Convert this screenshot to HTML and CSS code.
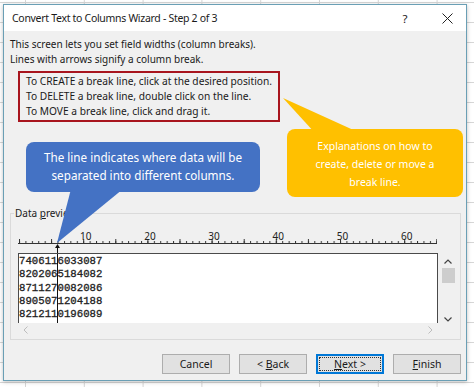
FILE: index.html
```html
<!DOCTYPE html>
<html lang="en">

<head>
  <meta charset="UTF-8">
  <meta name="viewport" content="width=device-width, initial-scale=1.0">
  <title>Convert Text to Columns Wizard</title>
  <link rel="stylesheet" href="styles.css">
</head>

<body>
  <div class="dialog">
    <div class="titlebar">
      <span class="title">Convert Text to Columns Wizard - Step 2 of 3</span>
      <span class="help">?</span>
      <span class="close">
        <svg width="11" height="11" viewBox="0 0 11 11">
          <path d="M0.5 0.5L10.5 10.5M10.5 0.5L0.5 10.5" stroke="#222" stroke-width="1" />
        </svg>
      </span>
    </div>

    <div class="content">
      <p class="intro">This screen lets you set field widths (column breaks).<br>Lines with arrows signify a column break.</p>

      <div class="howto">
        To CREATE a break line, click at the desired position.<br>
        To DELETE a break line, double click on the line.<br>
        To MOVE a break line, click and drag it.
      </div>

      <fieldset class="group">
        <legend>Data <u>p</u>review</legend>

        <!-- ruler: one char = 6.42px, column 0 at x=5 -->
        <svg class="ruler" width="440" height="32" viewBox="0 0 440 32">
          <defs>
            <pattern id="tick1" x="5" y="0" width="6.42" height="32" patternUnits="userSpaceOnUse">
              <rect x="0" y="0" width="1" height="32" fill="#333" />
            </pattern>
            <pattern id="tick5" x="5" y="0" width="32.1" height="32" patternUnits="userSpaceOnUse">
              <rect x="0" y="0" width="1" height="32" fill="#333" />
            </pattern>
          </defs>
          <rect x="4" y="22" width="419" height="1" fill="#333" />
          <rect x="5" y="20" width="418" height="2" fill="url(#tick1)" />
          <rect x="5" y="18" width="418" height="4" fill="url(#tick5)" />
          <g class="ruler-num" text-anchor="middle">
            <text x="71.7" y="19">10</text>
            <text x="135.9" y="19">20</text>
            <text x="200.1" y="19">30</text>
            <text x="264.3" y="19">40</text>
            <text x="328.5" y="19">50</text>
            <text x="392.7" y="19">60</text>
          </g>
          <!-- break line arrow -->
          <path d="M43.5 23 L46 27 L41 27 Z" fill="#111" />
          <rect x="43" y="27" width="1" height="5" fill="#111" />
        </svg>

        <div class="preview-row">
          <div class="preview-col">
            <div class="preview">
              <div class="break"></div>
              <div>7406116033087</div>
              <div>8202065184082</div>
              <div>8711270082086</div>
              <div>8905071204188</div>
              <div>8212110196089</div>
            </div>
            <div class="hscroll">
              <svg width="5" height="8" viewBox="0 0 5 8"><path d="M4.5 0.5L1 4L4.5 7.5" fill="none" stroke="#bdbdbd" /></svg>
              <svg width="5" height="8" viewBox="0 0 5 8"><path d="M0.5 0.5L4 4L0.5 7.5" fill="none" stroke="#bdbdbd" /></svg>
            </div>
          </div>
          <div class="vscroll">
            <svg width="8" height="5" viewBox="0 0 8 5"><path d="M0.5 4.5L4 1L7.5 4.5" fill="none" stroke="#444" stroke-width="1.2" /></svg>
            <span class="thumb"></span>
            <svg class="down" width="8" height="5" viewBox="0 0 8 5"><path d="M0.5 0.5L4 4L7.5 0.5" fill="none" stroke="#444" stroke-width="1.2" /></svg>
          </div>
        </div>
      </fieldset>

      <div class="buttons">
        <button class="btn">Cancel</button>
        <button class="btn">&lt; <u>B</u>ack</button>
        <button class="btn btn-default"><u>N</u>ext &gt;</button>
        <button class="btn"><u>F</u>inish</button>
      </div>
    </div>

    <!-- annotations over the dialog -->
    <div class="callout callout-yellow">Explanations on how to<br>create, delete or move a<br>break line.</div>
    <div class="callout callout-blue">The line indicates where data will be<br>separated into different columns.</div>
    <svg class="tails" width="462" height="375" viewBox="0 0 462 375">
      <polygon points="279,93 311,128 356,128" fill="#ffc000" />
      <polygon points="67,184 119,184 53,238" fill="#4472c4" />
    </svg>
  </div>
</body>

</html>
```

FILE: styles.css
```css
* {
  margin: 0;
  padding: 0;
}

body {
  height: 387px;
  overflow: hidden;
  background-color: #fff;
  background-image:
    linear-gradient(to right, #d6d6d6 1px, transparent 1px),
    linear-gradient(to bottom, #d6d6d6 1px, transparent 1px);
  background-size: 58.8px 20px, 58.8px 20px;
  background-position: 25px 0, 0 2px;
  font-family: "Noto Sans", "Open Sans", sans-serif;
  color: #1a1a1a;
}

.dialog {
  position: relative;
  box-sizing: border-box;
  width: 464px;
  height: 377px;
  margin: 4px 0 0 3px;
  border: 1px solid #6a9fb5;
  background-color: #f0f0f0;
  box-shadow: 0 1px 4px rgba(0, 0, 0, 0.25);
  display: flex;
  flex-direction: column;
}

/* title bar */
.titlebar {
  flex: none;
  height: 26px;
  display: flex;
  align-items: center;
  padding: 0 4px 0 8px;
  background-color: #fff;
  font-size: 10.5px;
}

.titlebar .title {
  flex: 1;
  letter-spacing: -0.3px;
}

.titlebar .help {
  width: 30px;
  margin-right: 12px;
  text-align: center;
  font-size: 11.5px;
}

.titlebar .close {
  width: 30px;
  display: flex;
  justify-content: center;
}

/* body */
.content {
  flex: 1;
  font-size: 10px;
}

.intro {
  margin: 6px 0 0 6px;
  line-height: 15px;
}

.howto {
  width: 262px;
  box-sizing: border-box;
  margin: 4px 0 0 14px;
  padding: 1px 6px;
  border: 2px solid #a8151e;
  line-height: 15px;
  font-size: 10.2px;
  white-space: nowrap;
}

.group {
  width: 451px;
  box-sizing: border-box;
  margin: 83px 0 0 6px;
  padding: 0 3px 2px 3px;
  border: 1px solid #dadada;
}

.group legend {
  padding: 0 1px;
  line-height: 16px;
}

.ruler {
  display: block;
}

.ruler-num {
  font-family: "Noto Sans", sans-serif;
  font-size: 10px;
  fill: #222;
}

.preview-row {
  display: flex;
  margin-left: 4px;
}

.preview-col {
  width: 420px;
}

.preview {
  position: relative;
  box-sizing: border-box;
  height: 70px;
  padding-top: 1px;
  border: 1px solid #4a4a4a;
  border-bottom: none;
  background-color: #fff;
  font-family: "Liberation Mono", monospace;
  font-size: 10.7px;
  line-height: 13.25px;
  color: #222;
  -webkit-text-stroke: 0.3px #222;
  overflow: hidden;
}

.preview .break {
  position: absolute;
  left: 38px;
  top: 0;
  bottom: 0;
  width: 1px;
  background-color: #111;
}

.hscroll {
  height: 14px;
  display: flex;
  justify-content: space-between;
  align-items: center;
  padding: 0 5px;
}

.vscroll {
  width: 18px;
  height: 70px;
  margin-left: 1px;
  display: flex;
  flex-direction: column;
  align-items: center;
  padding-top: 6px;
}

.vscroll .thumb {
  width: 13px;
  height: 15px;
  margin-top: 4px;
  background-color: #cdcdcd;
}

.vscroll .down {
  margin-top: auto;
  margin-bottom: 7px;
}

/* buttons */
.buttons {
  display: flex;
  justify-content: flex-end;
  gap: 9px;
  margin: 14px 5px 0 0;
}

.btn {
  width: 68px;
  height: 20px;
  border: 1px solid #adadad;
  background-color: #e1e1e1;
  font-family: "Noto Sans", sans-serif;
  font-size: 10.5px;
  color: #1a1a1a;
}

.btn-default {
  border-color: #0078d7;
  box-shadow: inset 0 0 0 1px #0078d7;
  outline: 1px dotted #333;
  outline-offset: -4px;
}

/* callouts */
.callout {
  position: absolute;
  box-sizing: border-box;
  border-radius: 8px;
  color: #fff;
  text-align: center;
  line-height: 18px;
}

.callout-yellow {
  left: 283px;
  top: 124px;
  width: 176px;
  height: 68px;
  padding-top: 8px;
  background-color: #ffc000;
  font-size: 10.5px;
}

.callout-blue {
  left: 22px;
  top: 137px;
  width: 234px;
  height: 50px;
  padding-top: 6px;
  background-color: #4472c4;
  font-size: 11.7px;
}

.tails {
  position: absolute;
  left: 0;
  top: 0;
  pointer-events: none;
}
```
